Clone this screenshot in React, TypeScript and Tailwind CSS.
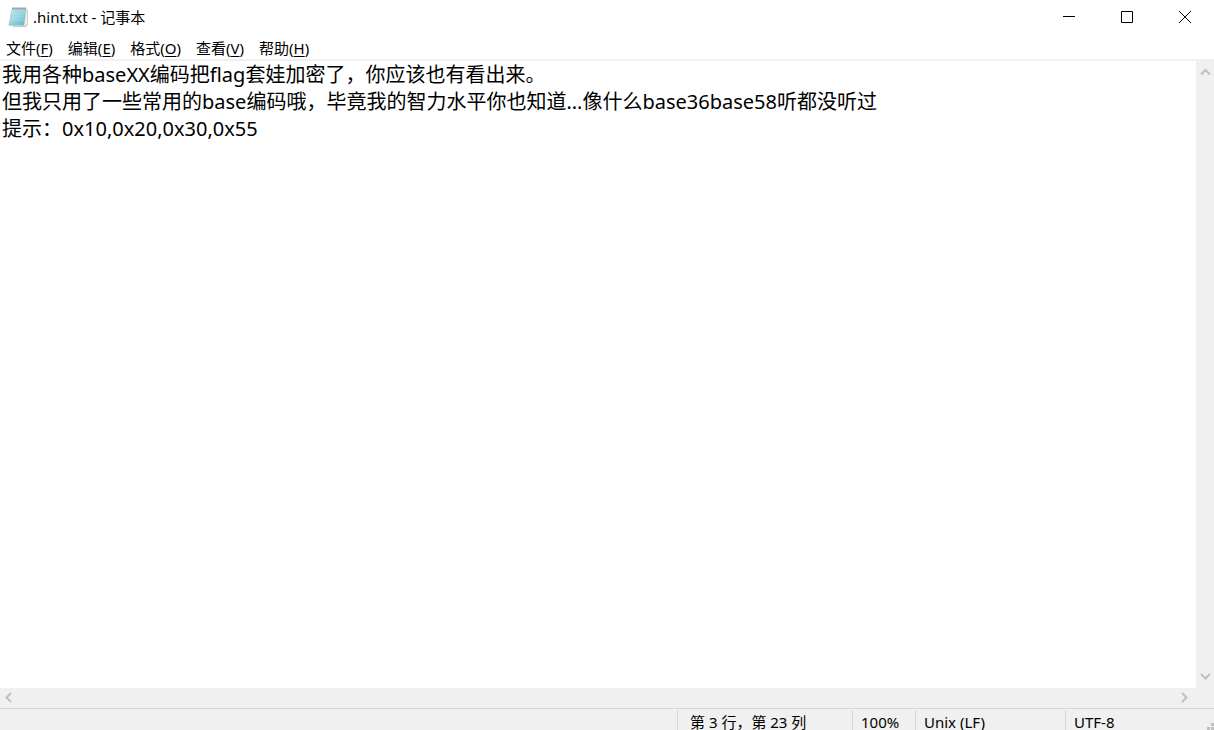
import { useState } from 'react'

const menus = [
  { label: '文件', accessKey: 'F' },
  { label: '编辑', accessKey: 'E' },
  { label: '格式', accessKey: 'O' },
  { label: '查看', accessKey: 'V' },
  { label: '帮助', accessKey: 'H' },
]

const initialText = `我用各种baseXX编码把flag套娃加密了，你应该也有看出来。
但我只用了一些常用的base编码哦，毕竟我的智力水平你也知道...像什么base36base58听都没听过
提示：0x10,0x20,0x30,0x55`

function NotepadIcon() {
  return (
    <svg width="20" height="20" viewBox="0 0 20 20" aria-hidden="true">
      <defs>
        <linearGradient id="page" x1="0" y1="0" x2="1" y2="1">
          <stop offset="0" stopColor="#c5e9f0" />
          <stop offset="0.5" stopColor="#98d3e0" />
          <stop offset="1" stopColor="#59b1c8" />
        </linearGradient>
      </defs>
      <path d="M4 3.5 19.5 2.5V18L17 20H5z" fill="#a99c85" />
      <path d="M4.5 2.5H19V17.5L16.5 19.5H3z" fill="#f3f0e8" />
      <path d="M4 2H18L16 18.3H.8z" fill="url(#page)" stroke="#8fbcc7" strokeWidth="0.5" />
      <path d="M4 7H16.5M3.6 10H16M3.2 13H15.7" stroke="#b6e0e9" strokeWidth="0.6" />
      <path d="M4 1.7H18.5" stroke="#d5dcde" strokeWidth="2" />
      <path d="M4.5 1.5H18.5" stroke="#66767b" strokeWidth="2" strokeDasharray="1 1" />
    </svg>
  )
}

function Chevron({ d }: { d: string }) {
  return (
    <svg width="11" height="11" viewBox="0 0 11 11" fill="none" stroke="#bfbfbf" strokeWidth="2" aria-hidden="true">
      <path d={d} />
    </svg>
  )
}

function TitleBar() {
  return (
    <header className="flex h-[34px] shrink-0 items-center justify-between">
      <div className="flex items-center gap-[5px] pl-2">
        <NotepadIcon />
        <h1 className="text-[15px] leading-5">.hint.txt - 记事本</h1>
      </div>
      <div className="flex h-full">
        <button type="button" aria-label="最小化" className="flex w-[58px] items-center justify-center">
          <svg width="12" height="12" viewBox="0 0 12 12" stroke="#000" aria-hidden="true">
            <path d="M0 5.5H12" />
          </svg>
        </button>
        <button type="button" aria-label="最大化" className="flex w-[58px] items-center justify-center">
          <svg width="12" height="12" viewBox="0 0 12 12" fill="none" stroke="#000" aria-hidden="true">
            <path d="M.5 .5H11.5V11.5H.5z" />
          </svg>
        </button>
        <button type="button" aria-label="关闭" className="flex w-[58px] items-center justify-center">
          <svg width="12" height="12" viewBox="0 0 12 12" stroke="#000" aria-hidden="true">
            <path d="M0 0L12 12M12 0L0 12" />
          </svg>
        </button>
      </div>
    </header>
  )
}

function MenuBar() {
  return (
    <nav className="flex h-[27px] shrink-0 items-center gap-[15px] border-b-2 border-[#f0f0f0] pl-1.5 pt-0.5">
      {menus.map((menu) => (
        <button key={menu.accessKey} type="button" className="text-[15px] leading-5">
          {menu.label}(<u className="underline-offset-2">{menu.accessKey}</u>)
        </button>
      ))}
    </nav>
  )
}

function StatusBar() {
  return (
    <footer className="flex h-[22px] shrink-0 border-t border-[#d7d7d7] bg-[#f0f0f0] pt-px text-[15px] leading-4 whitespace-nowrap">
      <div className="flex-1" />
      <div className="w-[175px] border-l border-[#d7d7d7] pt-1 pl-3">第 3 行，第 23 列</div>
      <div className="w-[63px] border-l border-[#d7d7d7] pt-1 pl-2">100%</div>
      <div className="w-[150px] border-l border-[#d7d7d7] pt-1 pl-2">Unix (LF)</div>
      <div className="flex w-[149px] items-end justify-between border-l border-[#d7d7d7] pt-1 pl-2">
        <span>UTF-8</span>
        <svg width="8" height="8" viewBox="0 0 8 8" fill="#bfbfbf" aria-hidden="true">
          <path d="M5 1h3v3H5zM1 5h3v3H1zM5 5h3v3H5z" />
        </svg>
      </div>
    </footer>
  )
}

export default function App() {
  const [text, setText] = useState(initialText)

  return (
    <div className="flex h-screen flex-col overflow-hidden bg-white font-['Noto_Sans','Noto_Sans_CJK_SC',sans-serif] text-black">
      <TitleBar />
      <MenuBar />
      <main className="flex min-h-0 flex-1">
        <textarea
          aria-label="文本编辑器"
          value={text}
          onChange={(e) => setText(e.target.value)}
          spellCheck={false}
          wrap="off"
          className="min-w-0 flex-1 resize-none overflow-hidden pl-0.5 text-xl leading-[27px] outline-none"
        />
        <div className="flex w-[18px] flex-col items-center justify-between bg-[#f0f0f0] py-1.5">
          <button type="button" aria-label="向上滚动">
            <Chevron d="M1 7.5 5.5 3 10 7.5" />
          </button>
          <button type="button" aria-label="向下滚动">
            <Chevron d="M1 3 5.5 7.5 10 3" />
          </button>
        </div>
      </main>
      <div className="flex h-5 shrink-0 items-center justify-between bg-[#f0f0f0] pr-6 pb-px pl-1">
        <button type="button" aria-label="向左滚动">
          <Chevron d="M7 1 2.5 5.5 7 10" />
        </button>
        <button type="button" aria-label="向右滚动">
          <Chevron d="M3 1 7.5 5.5 3 10" />
        </button>
      </div>
      <StatusBar />
    </div>
  )
}
